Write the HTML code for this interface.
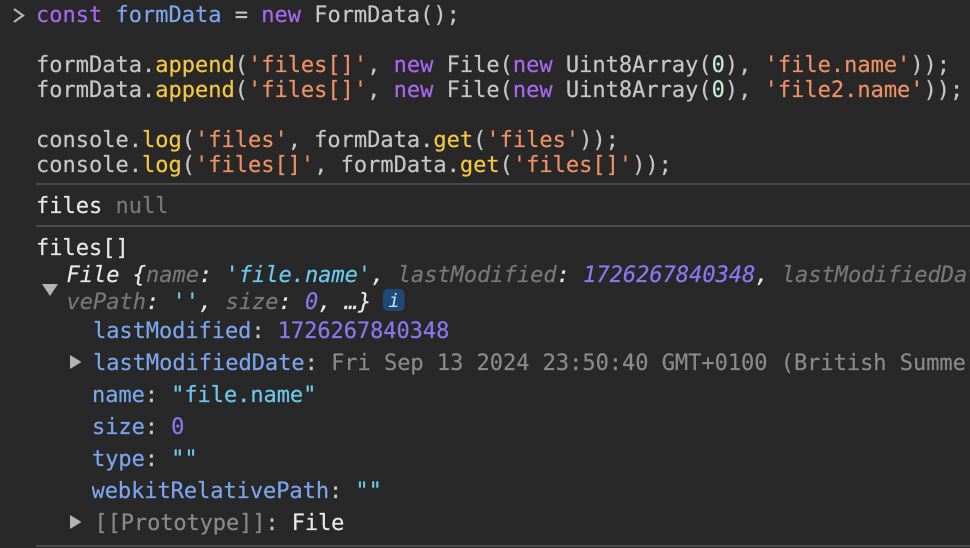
<!DOCTYPE html>
<html>
<head>
<meta charset="utf-8">
<style>
html,body{margin:0;padding:0;width:970px;height:548px;overflow:hidden;background:#282828}
body{position:relative;font-family:"DejaVu Sans Mono","Liberation Mono",monospace;font-size:22px;color:#c6c6c6;-webkit-text-stroke:0.2px}
.l{position:absolute;right:0;overflow:hidden;white-space:pre;line-height:26px;height:26px}
.t{letter-spacing:-0.05px}
.k{color:#a968f0}.v{color:#7ba6ee}.f{color:#f5c842}.s{color:#ee9065}.z{color:#c5ead2}
.w{color:#e8e8e8}.g{color:#787878}.n{color:#8b78f0}.c{color:#6cc8ee}.d{color:#8a8a8a}
i{font-style:italic}
.hr{position:absolute;left:36px;right:0;height:2px;background:#4a4a4a}
svg{position:absolute}
</style>
</head>
<body>
<svg style="left:12px;top:7px" width="13" height="17" viewBox="0 0 13 17"><path d="M2 2 L11 8.5 L2 15" fill="none" stroke="#b4b4b4" stroke-width="2.2"/></svg>
<div class="l" style="left:36px;top:3px"><span class="k">const</span> <span class="v">formData</span> = <span class="k">new</span> FormData();</div>
<div class="l" style="left:36px;top:53px">formData.<span class="f">append</span>(<span class="s">'files[]'</span>, <span class="k">new</span> File(<span class="k">new</span> Uint8Array(<span class="z">0</span>), <span class="s">'file.name'</span>));</div>
<div class="l" style="left:36px;top:78px">formData.<span class="f">append</span>(<span class="s">'files[]'</span>, <span class="k">new</span> File(<span class="k">new</span> Uint8Array(<span class="z">0</span>), <span class="s">'file2.name'</span>));</div>
<div class="l" style="left:36px;top:128px">console.<span class="f">log</span>(<span class="s">'files'</span>, formData.<span class="f">get</span>(<span class="s">'files'</span>));</div>
<div class="l" style="left:36px;top:153px">console.<span class="f">log</span>(<span class="s">'files[]'</span>, formData.<span class="f">get</span>(<span class="s">'files[]'</span>));</div>
<div class="hr" style="top:183px"></div>
<div class="l w" style="left:36px;top:194px">files <span class="g">null</span></div>
<div class="hr" style="top:225px"></div>
<div class="l w" style="left:36px;top:236px">files[]</div>
<svg style="left:42px;top:284px" width="16" height="13" viewBox="0 0 16 13"><path d="M0 0H16L8 12Z" fill="#b4b4b4"/></svg>
<div class="l" style="left:66.5px;top:263px"><i><span class="w">File {</span><span class="g">name</span><span class="w">:</span> <span class="c">'file.name'</span><span class="w">,</span> <span class="g">lastModified</span><span class="w">:</span> <span class="n">1726267840348</span><span class="w">,</span> <span class="g">lastModifiedDate</span></i></div>
<div class="l" style="left:66.5px;top:290px"><i><span class="g">vePath</span><span class="w">:</span> <span class="c">''</span><span class="w">,</span> <span class="g">size</span><span class="w">:</span> <span class="n">0</span><span class="w">, …}</span></i></div>
<svg style="left:383px;top:288px" width="22" height="24" viewBox="0 0 22 24"><rect width="21.5" height="22" y="1" rx="5" fill="#1f4a78"/><text x="11" y="19" font-family="DejaVu Sans Mono" font-style="italic" font-size="19" fill="#c8e2fa" text-anchor="middle">i</text></svg>
<div class="l t" style="left:93px;top:319px"><span class="v">lastModified</span>: <span class="n">1726267840348</span></div>
<svg style="left:70px;top:355px" width="12" height="14" viewBox="0 0 12 14"><path d="M0 0L11.5 7L0 14Z" fill="#b4b4b4"/></svg>
<div class="l" style="left:93px;top:351px;letter-spacing:-0.02px"><span class="v">lastModifiedDate</span>: <span class="d">Fri Sep 13 2024 23:50:40 GMT+0100 (British Summe</span></div>
<div class="l t" style="left:92px;top:383px"><span class="v">name</span>: <span class="c">"file.name"</span></div>
<div class="l t" style="left:92px;top:415px"><span class="v">size</span>: <span class="n">0</span></div>
<div class="l t" style="left:92px;top:447px"><span class="v">type</span>: <span class="c">""</span></div>
<div class="l t" style="left:91.5px;top:479px"><span class="v">webkitRelativePath</span>: <span class="c">""</span></div>
<svg style="left:70px;top:515px" width="12" height="14" viewBox="0 0 12 14"><path d="M0 0L11.5 7L0 14Z" fill="#b4b4b4"/></svg>
<div class="l" style="left:94.5px;top:511px;letter-spacing:-0.1px"><span class="d">[[Prototype]]</span>: <span class="w">File</span></div>
<div class="hr" style="top:545px"></div>
</body>
</html>
